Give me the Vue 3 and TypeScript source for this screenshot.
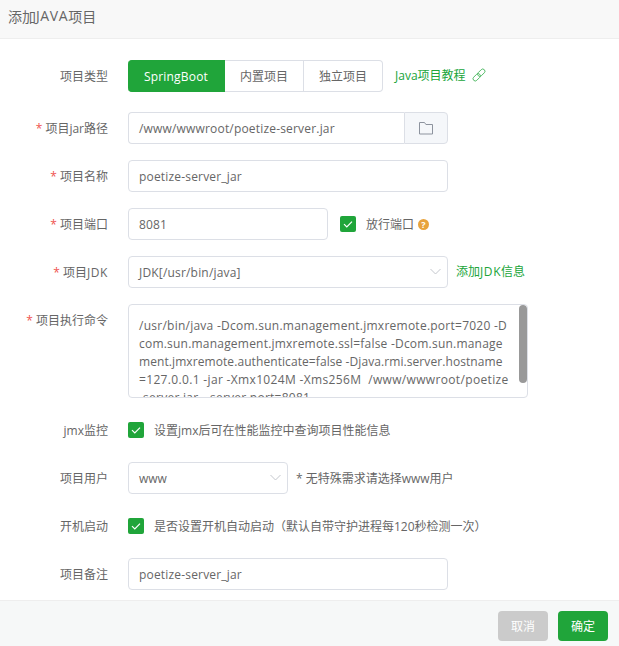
<script setup lang="ts">
interface CommandLine {
  text: string
  spacing: number
}

const commandLines: CommandLine[] = [
  { text: '/usr/bin/java -Dcom.sun.management.jmxremote.port=7020 -D', spacing: 0.25 },
  { text: 'com.sun.management.jmxremote.ssl=false -Dcom.sun.manage', spacing: 0.21 },
  { text: 'ment.jmxremote.authenticate=false -Djava.rmi.server.hostname', spacing: 0.08 },
  { text: '=127.0.0.1 -jar -Xmx1024M -Xms256M  /www/wwwroot/poetize', spacing: 0.34 },
  { text: '-server.jar --server.port=8081', spacing: 0.25 },
]
</script>

<template>
  <div class="dialog">
    <header class="head">添加<span class="caps">JAVA</span>项目</header>
    <main class="form">
      <div class="row first">
        <label class="label">项目类型</label>
        <div class="tabs">
          <span class="tab active lat">SpringBoot</span>
          <span class="tab t2">内置项目</span>
          <span class="tab t2 last">独立项目</span>
        </div>
        <a class="link tutorial">Java项目教程
          <svg class="chain" width="14" height="14" viewBox="0 0 14 14" fill="none" stroke="#4db862" stroke-width="0.9">
            <g transform="rotate(-45 7 7)">
              <rect x="-0.5" y="4.8" width="8.5" height="4.4" rx="2.2" />
              <rect x="6" y="4.8" width="8.5" height="4.4" rx="2.2" />
            </g>
          </svg>
        </a>
      </div>

      <div class="row">
        <label class="label"><i>*</i> 项目jar路径</label>
        <div class="group">
          <div class="input grow flat lat">/www/wwwroot/poetize-server.jar</div>
          <div class="folder">
            <svg width="16" height="13" viewBox="0 0 16 13" fill="none" stroke="#8d939e" stroke-width="1">
              <path d="M1.5 0.5h5l1.4 2h6.6v9.5h-13z" />
            </svg>
          </div>
        </div>
      </div>

      <div class="row">
        <label class="label"><i>*</i> 项目名称</label>
        <div class="input w320 lat">poetize-server_jar</div>
      </div>

      <div class="row">
        <label class="label"><i>*</i> 项目端口</label>
        <div class="input w200 lat">8081</div>
        <span class="check port"><svg viewBox="0 0 16 16" width="16" height="16"><path d="M4 8.2l2.8 2.8L12 5.6" fill="none" stroke="#fff" stroke-width="1.2" /></svg></span>
        <span class="text">放行端口</span>
        <span class="help">?</span>
      </div>

      <div class="row">
        <label class="label"><i>*</i> 项目<span class="caps">JDK</span></label>
        <div class="input w320 select lat">JDK[/usr/bin/java]
          <svg class="caret" width="11" height="7" viewBox="0 0 11 7" fill="none" stroke="#c4c7cd" stroke-width="1"><path d="M.5 1l5 5 5-5" /></svg>
        </div>
        <a class="link jdk">添加<span class="caps">JDK</span>信息</a>
      </div>

      <div class="row top">
        <label class="label cmd"><i>*</i> 项目执行命令</label>
        <div class="area">
          <div class="area-text">
            <div
              v-for="line in commandLines"
              :key="line.text"
              class="area-line"
              :style="{ letterSpacing: line.spacing + 'px' }"
            >{{ line.text }}</div>
          </div>
          <span class="thumb"></span>
        </div>
      </div>

      <div class="row">
        <label class="label">jmx监控</label>
        <span class="check"><svg viewBox="0 0 16 16" width="16" height="16"><path d="M4 8.2l2.8 2.8L12 5.6" fill="none" stroke="#fff" stroke-width="1.2" /></svg></span>
        <span class="text">设置jmx后可在性能监控中查询项目性能信息</span>
      </div>

      <div class="row">
        <label class="label">项目用户</label>
        <div class="input w160 select">www
          <svg class="caret" width="11" height="7" viewBox="0 0 11 7" fill="none" stroke="#c4c7cd" stroke-width="1"><path d="M.5 1l5 5 5-5" /></svg>
        </div>
        <span class="hint">* 无特殊需求请选择www用户</span>
      </div>

      <div class="row">
        <label class="label">开机启动</label>
        <span class="check"><svg viewBox="0 0 16 16" width="16" height="16"><path d="M4 8.2l2.8 2.8L12 5.6" fill="none" stroke="#fff" stroke-width="1.2" /></svg></span>
        <span class="text">是否设置开机自动启动（默认自带守护进程每120秒检测一次）</span>
      </div>

      <div class="row">
        <label class="label">项目备注</label>
        <div class="input w320 lat">poetize-server_jar</div>
      </div>
    </main>
    <footer class="foot">
      <button class="btn cancel">取消</button>
      <button class="btn ok">确定</button>
    </footer>
  </div>
</template>

<style>
html, body { margin: 0; background: #fff; }
</style>

<style scoped>
.dialog {
  width: 619px;
  height: 646px;
  overflow: hidden;
  display: flex;
  flex-direction: column;
  font-family: "Open Sans", "Noto Sans CJK SC", sans-serif;
  font-size: 12px;
  color: #666;
  background: #fff;
}
.lat { letter-spacing: 0.18px; }
.caps { letter-spacing: 0.6px; }
.head {
  height: 39px;
  box-sizing: border-box;
  padding: 0 8px 7px;
  display: flex;
  align-items: center;
  font-size: 14px;
  color: #666;
  background: #f8f8f8;
  border-bottom: 1px solid #eee;
}
.form {
  flex: 1;
  padding-top: 5px;
  display: flex;
  flex-direction: column;
  gap: 16px;
}
.row {
  display: flex;
  align-items: center;
  min-height: 32px;
}
.row.first { margin-top: 16px; margin-bottom: 4px; }
.row.top { align-items: flex-start; }
.label {
  width: 108px;
  margin-right: 20px;
  flex: none;
  text-align: right;
  color: #666;
}
.label i { font-style: normal; color: #ef5350; }
.cmd { line-height: 34px; }
.tabs { display: flex; height: 32px; }
.tab {
  width: 79px;
  box-sizing: border-box;
  display: flex;
  align-items: center;
  justify-content: center;
  border: 1px solid #dcdfe6;
  border-left: none;
  color: #666;
}
.tab.active {
  width: 97px;
  background: #20a53a;
  color: #fff;
  border-color: #20a53a;
  border-radius: 4px 0 0 4px;
}
.tab.last { border-radius: 0 4px 4px 0; }
.link { color: #20a53a; }
.tutorial { margin-left: 12px; display: inline-flex; align-items: center; margin-top: -2px; }
.chain { margin-left: 6px; }
.jdk { margin-left: 8px; margin-top: -2px; }
.group { display: flex; width: 320px; }
.input {
  position: relative;
  height: 32px;
  box-sizing: border-box;
  padding: 0 10px;
  display: flex;
  align-items: center;
  border: 1px solid #dcdfe6;
  border-radius: 4px;
  color: #666;
  background: #fff;
}
.grow { flex: 1; }
.flat { border-radius: 4px 0 0 4px; border-right: none; }
.folder {
  width: 44px;
  height: 32px;
  box-sizing: border-box;
  display: flex;
  align-items: center;
  justify-content: center;
  border: 1px solid #dcdfe6;
  border-radius: 0 4px 4px 0;
  background: #f5f7fa;
}
.w320 { width: 320px; }
.w200 { width: 200px; }
.w160 { width: 160px; }
.caret { position: absolute; right: 6px; top: 11px; }
.check {
  width: 16px;
  height: 16px;
  flex: none;
  border-radius: 2px;
  background: #20a53a;
  display: block;
}
.check svg { display: block; }
.check.port { margin-left: 12px; }
.text { margin-left: 10px; color: #666; }
.help {
  width: 11px;
  height: 11px;
  margin-left: 4px;
  border-radius: 50%;
  background: #e8a33d;
  color: #fff;
  font-size: 9px;
  font-weight: 700;
  line-height: 11px;
  text-align: center;
}
.hint { margin-left: 8px; color: #666; }
.area {
  position: relative;
  width: 400px;
  height: 94px;
  box-sizing: border-box;
  border: 1px solid #dcdfe6;
  border-radius: 4px;
  overflow: hidden;
}
.area-text {
  padding: 12px 10px 0;
  line-height: 18px;
  color: #666;
}
.area-line { white-space: pre; }
.thumb {
  position: absolute;
  right: 0;
  top: 0;
  width: 8px;
  height: 78px;
  border-radius: 4px;
  background: #999;
}
.foot {
  height: 46px;
  box-sizing: border-box;
  padding: 10px 11px 0 0;
  display: flex;
  justify-content: flex-end;
  gap: 10px;
  background: #f6f8f8;
  border-top: 1px solid #eee;
}
.btn {
  width: 50px;
  height: 30px;
  padding: 0;
  border: none;
  border-radius: 4px;
  font: inherit;
  color: #fff;
}
.cancel { background: #cbcbcb; }
.ok { background: #20a53a; }
</style>
